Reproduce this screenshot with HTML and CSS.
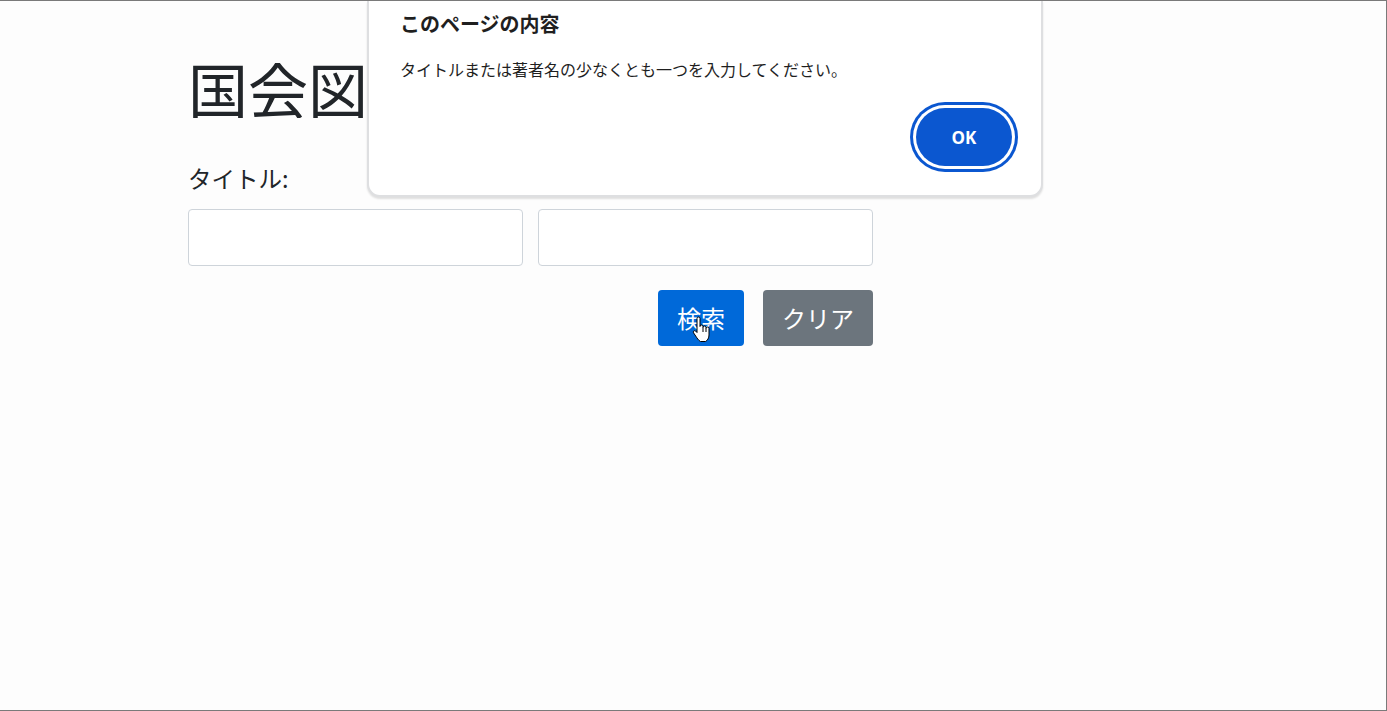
FILE: index.html
```html
<!DOCTYPE html>
<html lang="ja">
<head>
<meta charset="utf-8">
<title>国会図書館検索</title>
<link rel="stylesheet" href="styles.css">
</head>
<body>
<div class="frame">
  <main class="container">
    <h1 class="heading">国会図書館 書籍検索</h1>
    <label class="label">タイトル:</label>
    <div class="inputs">
      <input class="field" type="text">
      <input class="field" type="text">
    </div>
    <div class="actions">
      <button class="btn btn-primary">検索</button>
      <button class="btn btn-secondary">クリア</button>
    </div>
  </main>

  <div class="dialog">
    <div class="dialog-title">このページの内容</div>
    <div class="dialog-message">タイトルまたは著者名の少なくとも一つを入力してください。</div>
    <div class="dialog-footer">
      <button class="ok">OK</button>
    </div>
  </div>

  <svg class="cursor" width="20" height="27" viewBox="0 0 20 27">
    <path d="M5 2.5a1.5 1.5 0 0 1 3 0V10.5a1.5 1.5 0 0 1 3 0v1a1.5 1.5 0 0 1 3 0v1a1.5 1.5 0 0 1 3 0V19c0 3-1.5 5.5-3.5 6.5H8.5c-2-1-3.5-3.5-5.5-6.5l-1.5-2.2a1.4 1.4 0 0 1 2.2-1.7L5 16.5Z" fill="#fff" stroke="#000" stroke-width="1" stroke-linejoin="round"/>
    <path d="M11 11.5v4.5M14 12.5v3.5" stroke="#000" stroke-width="1" fill="none"/>
  </svg>
</div>
</body>
</html>
```

FILE: styles.css
```css
html, body {
  margin: 0;
  padding: 0;
}
body {
  background: #fdfdfd;
  font-family: "Noto Sans CJK JP", "Noto Sans", sans-serif;
  color: #212529;
}
.frame {
  position: relative;
  width: 1387px;
  height: 711px;
  box-sizing: border-box;
  border-top: 1px solid #7a7a7a;
  border-right: 1px solid #7a7a7a;
  border-bottom: 1px solid #7a7a7a;
  overflow: hidden;
}
.container {
  width: 685px;
  margin-left: 188px;
  padding-top: 57px;
  display: flex;
  flex-direction: column;
}
.heading {
  margin: 0;
  width: 179px;
  overflow: hidden;
  font-size: 60px;
  font-weight: 400;
  line-height: 1;
  white-space: nowrap;
}
.label {
  margin-top: 49px;
  font-size: 23.5px;
  line-height: 1;
  height: 22px;
}
.inputs {
  margin-top: 20px;
  display: flex;
  gap: 15px;
}
.field {
  flex: 1;
  min-width: 0;
  height: 57px;
  box-sizing: border-box;
  border: 1px solid #ced4da;
  border-radius: 4px;
  background: #fff;
  margin: 0;
}
.actions {
  margin-top: 24px;
  display: flex;
  justify-content: flex-end;
  gap: 19px;
}
.btn {
  height: 56px;
  padding: 0 19px;
  border: none;
  border-radius: 4px;
  color: #fff;
  font-family: "Noto Sans CJK JP", sans-serif;
  font-size: 24px;
  line-height: 1;
}
.btn-primary {
  background: #0069d9;
}
.btn-secondary {
  background: #6c757d;
}
.dialog {
  position: absolute;
  left: 367px;
  top: 0;
  width: 676px;
  box-sizing: border-box;
  background: #fff;
  border: 2px solid #dedfe1;
  border-top: none;
  border-radius: 0 0 13px 13px;
  box-shadow: 0 2px 2px rgba(0, 0, 0, 0.12);
  padding: 13px 29px 29px 31px;
  display: flex;
  flex-direction: column;
  color: #1f1f1f;
}
.dialog-title {
  font-size: 20px;
  font-weight: 700;
  line-height: 20px;
}
.dialog-message {
  margin-top: 27px;
  font-size: 16px;
  line-height: 16px;
}
.dialog-footer {
  margin-top: 31px;
  display: flex;
  justify-content: flex-end;
}
.ok {
  width: 96px;
  height: 58px;
  border: none;
  border-radius: 29px;
  background: #0b57d0;
  color: #fff;
  font-family: "Open Sans", "Noto Sans", sans-serif;
  font-weight: 700;
  font-size: 17px;
  box-shadow: 0 0 0 3px #fff, 0 0 0 6px #0b57d0;
}
.cursor {
  position: absolute;
  left: 692px;
  top: 315px;
}
```
